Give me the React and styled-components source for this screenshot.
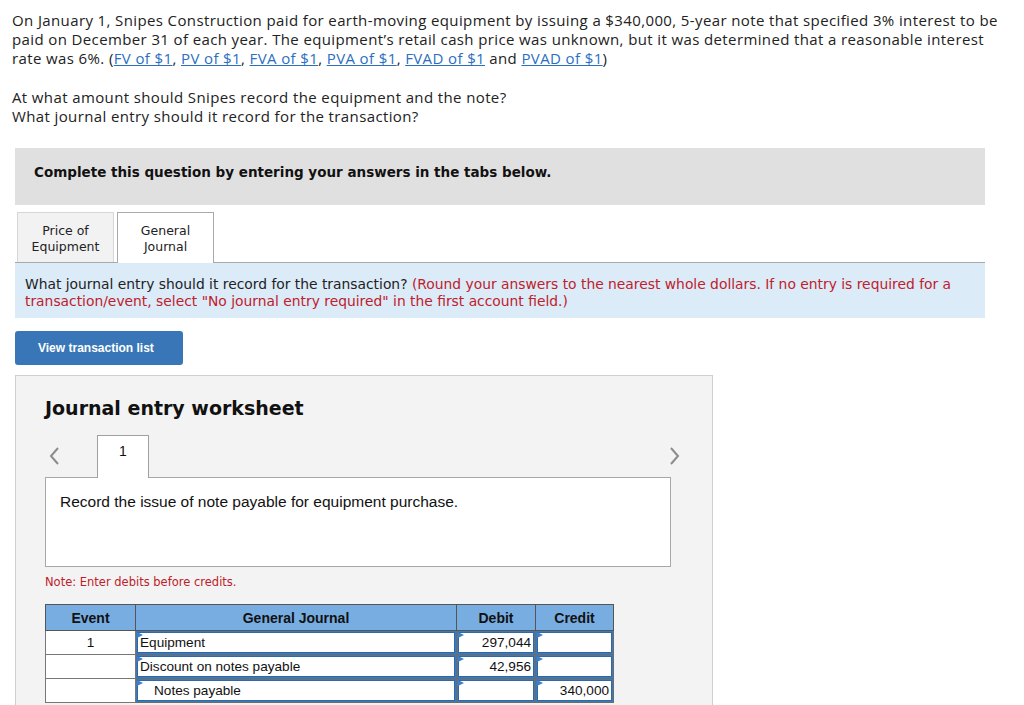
import React from "react";
import styled, { createGlobalStyle } from "styled-components";

const GlobalStyle = createGlobalStyle`
  body {
    margin: 0;
    background: #fff;
    color: #222;
  }
`;

const Page = styled.div`
  padding: 11px 12px 0 12px;
  width: 1000px;
`;

const Intro = styled.div`
  margin: 0;
  font-family: "Open Sans", "Liberation Sans", sans-serif;
  font-size: 15px;
  letter-spacing: 0.38px;
  line-height: 19px;
  color: #222;
`;

const Line = styled.div`
  white-space: nowrap;
`;

const Link = styled.a`
  color: #2a6fc0;
  text-decoration: underline;
`;

const Question = styled(Intro)`
  margin-top: 20px;
`;

const Widget = styled.div`
  margin: 22px 0 0 3px;
  width: 970px;
  font-family: Verdana, "DejaVu Sans", sans-serif;
`;

const Instruction = styled.div`
  background: #e0e0e0;
  height: 57px;
  box-sizing: border-box;
  padding: 16px 0 0 19px;
  font-weight: bold;
  font-size: 13.5px;
  color: #111;
`;

const TabRow = styled.div`
  display: flex;
  gap: 3px;
  margin-top: 7px;
  padding-left: 2px;
`;

const Tab = styled.div`
  width: 97px;
  box-sizing: border-box;
  display: flex;
  align-items: center;
  justify-content: center;
  padding-top: 2px;
  text-align: center;
  font-size: 12.5px;
  line-height: 16px;
  color: #222;
  border: 1px solid ${(p) => (p.active ? "#a9a9a9" : "#d6d6d6")};
  border-bottom: none;
  background: ${(p) => (p.active ? "#fff" : "#f2f2f2")};
  margin-bottom: ${(p) => (p.active ? "-1px" : "0")};
  position: relative;
  z-index: ${(p) => (p.active ? 1 : 0)};
  height: ${(p) => (p.active ? "51px" : "50px")};
`;

const Info = styled.div`
  background: #dbebf8;
  border-top: 1px solid #a9a9a9;
  padding: 13px 10px 8px 10px;
  font-size: 13.85px;
  line-height: 17px;
  color: #222;
`;

const Red = styled.span`
  color: #c0202a;
`;

const ActionButton = styled.button`
  display: block;
  margin-top: 13px;
  width: 168px;
  height: 34px;
  border: none;
  border-radius: 3px;
  background: #3876b8;
  color: #fff;
  font-family: Tahoma, "Liberation Sans", Arial, sans-serif;
  font-weight: bold;
  font-size: 12px;
  white-space: nowrap;
  text-align: left;
  padding: 0 0 0 23px;
`;

const Worksheet = styled.div`
  margin-top: 10px;
  width: 698px;
  box-sizing: border-box;
  background: #f3f3f3;
  border: 1px solid #cfcfcf;
  padding: 21px 0 0 29px;
  height: 340px;
`;

const Title = styled.h2`
  margin: 0;
  font-size: 19px;
  font-weight: bold;
  color: #111;
  line-height: 23px;
`;

const EntryNav = styled.div`
  display: flex;
  align-items: flex-end;
  width: 636px;
  margin-top: 15px;
`;

const Arrow = styled.div`
  width: 52px;
  height: 42px;
  box-sizing: border-box;
  display: flex;
  align-items: center;
  justify-content: ${(p) => (p.right ? "flex-end" : "flex-start")};
  padding-left: ${(p) => (p.right ? "0" : "3px")};
  svg {
    display: block;
  }
`;

const Spacer = styled.div`
  flex: 1;
`;

const EntryTab = styled.div`
  width: 52px;
  height: 43px;
  box-sizing: border-box;
  background: #fff;
  border: 1px solid #a0a0a0;
  border-bottom: none;
  margin-bottom: -1px;
  position: relative;
  z-index: 1;
  display: flex;
  justify-content: center;
  padding-top: 7px;
  font-family: "Liberation Sans", Arial, sans-serif;
  font-size: 14px;
  color: #111;
`;

const Description = styled.div`
  width: 626px;
  height: 90px;
  box-sizing: border-box;
  background: #fff;
  border: 1px solid #a8a8a8;
  padding: 15px 14px 14px;
  font-family: "Liberation Sans", Arial, sans-serif;
  font-size: 15.5px;
  color: #111;
`;

const Note = styled.div`
  margin-top: 8px;
  font-size: 11.5px;
  color: #c0202a;
`;

const Table = styled.table`
  margin-top: 15px;
  border-collapse: collapse;
  font-family: "Liberation Sans", Arial, sans-serif;
  font-size: 13.6px;
  color: #111;
`;

const Head = styled.th`
  background: #78ade2;
  border: 1px solid #555;
  height: 25px;
  padding: 0;
  font-size: 14px;
  font-weight: bold;
  width: ${(p) => p.w}px;
`;

const Cell = styled.td`
  background: #fff;
  border: 1px solid #777;
  padding: 0;
  text-align: center;
`;

const InputCell = styled.td`
  border: 1px solid #6b6b6b;
  background: #3f79b6;
  padding: 1px;
`;

const Field = styled.div`
  position: relative;
  height: 21px;
  box-sizing: border-box;
  background: #fff;
  border: 1px solid #2e68a6;
  line-height: 20px;
  padding: ${(p) => (p.indent ? "0 2px 0 16px" : "0 2px")};
  text-align: ${(p) => (p.num ? "right" : "left")};
  white-space: nowrap;
  &::before {
    content: "";
    position: absolute;
    left: -1px;
    top: -1px;
    border-left: 6px solid #3f7fc4;
    border-top: 3px solid transparent;
    border-bottom: 3px solid transparent;
  }
`;

const rows = [
  { event: "1", account: "Equipment", debit: "297,044", credit: "" },
  { event: "", account: "Discount on notes payable", debit: "42,956", credit: "" },
  { event: "", account: "Notes payable", debit: "", credit: "340,000", indent: true },
];

const Chevron = ({ dir }) => (
  <svg width="12" height="20" viewBox="0 0 12 20">
    <path
      d={dir === "left" ? "M10 2 L3 10 L10 18" : "M2 2 L9 10 L2 18"}
      fill="none"
      stroke="#8c8c8c"
      strokeWidth="2"
    />
  </svg>
);

export default function App() {
  return (
    <>
      <GlobalStyle />
      <Page>
        <Intro>
          <Line>
            On January 1, Snipes Construction paid for earth-moving equipment by issuing a
            $340,000, 5-year note that specified 3% interest to be
          </Line>
          <Line>
            paid on December 31 of each year. The equipment’s retail cash price was unknown, but
            it was determined that a reasonable interest
          </Line>
          <Line>
            rate was 6%. (<Link href="#">FV of $1</Link>, <Link href="#">PV of $1</Link>,{" "}
            <Link href="#">FVA of $1</Link>, <Link href="#">PVA of $1</Link>,{" "}
            <Link href="#">FVAD of $1</Link> and <Link href="#">PVAD of $1</Link>)
          </Line>
        </Intro>
        <Question>
          <Line>At what amount should Snipes record the equipment and the note?</Line>
          <Line>What journal entry should it record for the transaction?</Line>
        </Question>

        <Widget>
          <Instruction>Complete this question by entering your answers in the tabs below.</Instruction>
          <TabRow>
            <Tab>
              Price of
              <br />
              Equipment
            </Tab>
            <Tab active>
              General
              <br />
              Journal
            </Tab>
          </TabRow>
          <Info>
            <Line>
              What journal entry should it record for the transaction?{" "}
              <Red>
                (Round your answers to the nearest whole dollars. If no entry is required for a
              </Red>
            </Line>
            <Line>
              <Red>
                transaction/event, select "No journal entry required" in the first account field.)
              </Red>
            </Line>
          </Info>

          <ActionButton>View transaction list</ActionButton>

          <Worksheet>
            <Title>Journal entry worksheet</Title>
            <EntryNav>
              <Arrow>
                <Chevron dir="left" />
              </Arrow>
              <EntryTab>1</EntryTab>
              <Spacer />
              <Arrow right>
                <Chevron dir="right" />
              </Arrow>
            </EntryNav>
            <Description>Record the issue of note payable for equipment purchase.</Description>
            <Note>Note: Enter debits before credits.</Note>
            <Table>
              <thead>
                <tr>
                  <Head w={89}>Event</Head>
                  <Head w={320}>General Journal</Head>
                  <Head w={78}>Debit</Head>
                  <Head w={77}>Credit</Head>
                </tr>
              </thead>
              <tbody>
                {rows.map((r, i) => (
                  <tr key={i}>
                    <Cell>{r.event}</Cell>
                    <InputCell>
                      <Field indent={r.indent}>{r.account}</Field>
                    </InputCell>
                    <InputCell>
                      <Field num>{r.debit}</Field>
                    </InputCell>
                    <InputCell>
                      <Field num>{r.credit}</Field>
                    </InputCell>
                  </tr>
                ))}
              </tbody>
            </Table>
          </Worksheet>
        </Widget>
      </Page>
    </>
  );
}
